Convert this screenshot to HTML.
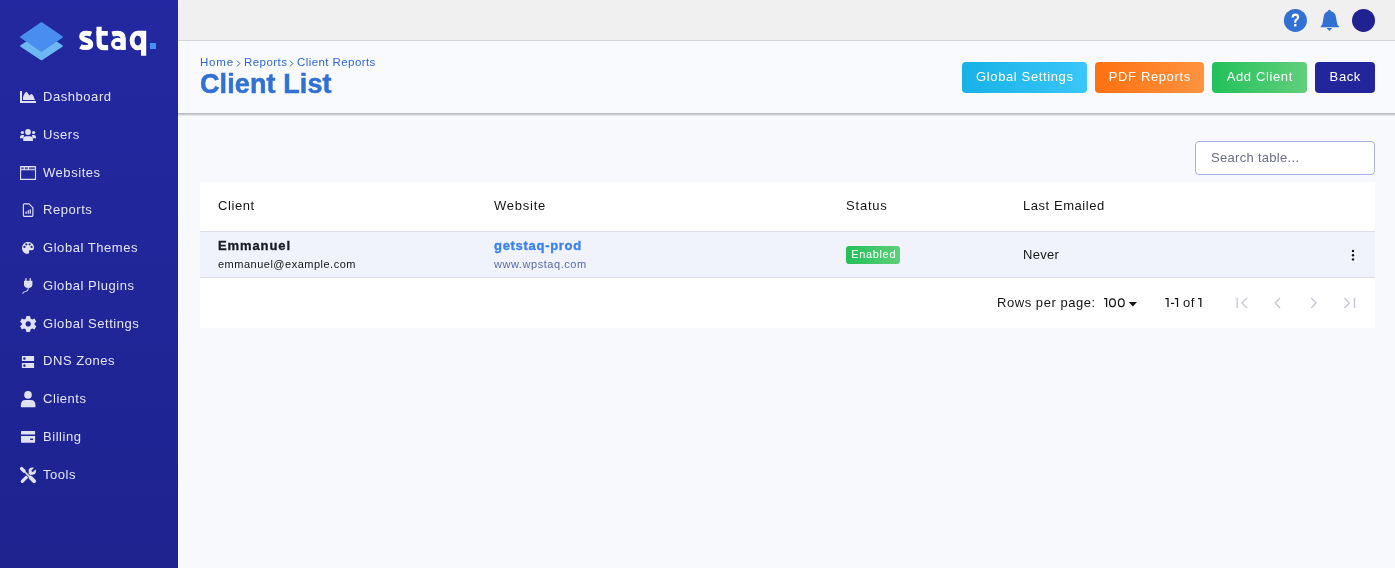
<!DOCTYPE html>
<html><head><meta charset="utf-8">
<style>
*{margin:0;padding:0;box-sizing:border-box}
html,body{width:1395px;height:568px;overflow:hidden;font-family:"Liberation Sans",sans-serif;background:#f8f9fd}
.abs{position:absolute}
.t,.nav,.btn,.badge{will-change:transform}
#side{position:absolute;left:0;top:0;width:178px;height:568px;background:linear-gradient(#2328a0,#1e2390)}
#topbar{position:absolute;left:178px;top:0;width:1217px;height:41px;background:#f0f0f0;border-bottom:1px solid #d6d7de}
#hdr{position:absolute;left:178px;top:41px;width:1217px;height:72px;background:#f9fafe;box-shadow:0 1px 0 #b9bac0,0 2px 0 #cdced6,0 3px 0 #e4e5ec}
.nav{position:absolute;left:43px;color:#e3e5f6;font-size:13px;letter-spacing:.55px;white-space:nowrap}
.ic{position:absolute}
.btn{position:absolute;top:62px;height:31px;border-radius:4px;color:#fff;font-size:13px;text-align:center;line-height:30px;letter-spacing:.62px;text-indent:.6px;white-space:nowrap}
.t{position:absolute;white-space:nowrap}
.bc{top:56px;font-size:11.5px;color:#2f66d0}
</style></head><body>
<div id="side">
  <!-- logo -->
  <svg class="abs" style="left:0;top:0" width="178" height="70" viewBox="0 0 178 70">
    <path d="M21 46 L41.5 32.5 L62 46 L41.5 59.5 Z" fill="#6db8f4" stroke="#6db8f4" stroke-width="1.6" stroke-linejoin="round"/>
    <path d="M21 37 L41.5 22.8 L62 37 L41.5 51.2 Z" fill="#4a8df0" stroke="#4a8df0" stroke-width="1.6" stroke-linejoin="round"/>
  </svg>
  <svg class="abs" style="left:70px;top:20px" width="100" height="40" viewBox="70 20 100 40" fill="none" stroke="#fff">
    <path d="M91.2 34.1 C89.8 33.5 88.2 33.3 86.3 33.3 C83.3 33.3 81.7 34.5 81.7 36.5 C81.7 38.5 83.3 39.3 86.1 40.1 C89.3 41 90.8 42 90.8 44.3 C90.8 46.6 88.9 47.6 85.9 47.6 C83.7 47.6 81.8 47.2 80.4 46.4" stroke-width="5"/>
    <path d="M99.1 26.7 V42.6 Q99.1 47.6 103.6 47.6 H108.1" stroke-width="5.2"/>
    <path d="M96.5 33.35 H107.8" stroke-width="4.7"/>
    <path d="M112.2 33.9 Q114.4 33.3 117.4 33.3 Q123.2 33.3 123.2 38.8 V50.1" stroke-width="5.2"/>
    <ellipse cx="117.8" cy="43.9" rx="4.9" ry="4.15" stroke-width="3.8"/>
    <ellipse cx="137.8" cy="40.5" rx="5.75" ry="7.3" stroke-width="4.8"/>
    <path d="M137.8 33.3 H143.6 V55.8" stroke-width="5.2"/>
  </svg>
  <div class="abs" style="left:150px;top:43px;width:6.3px;height:6.3px;background:#4490f4"></div>


  <svg class="abs" style="left:0;top:0" width="178" height="568" viewBox="0 0 178 568" fill="#dfe2f3">
    <!-- dashboard -->
    <rect x="20" y="91" width="2" height="12"/>
    <rect x="20" y="101" width="16" height="2"/>
    <path d="M23 100 L23 97 Q25 92 26.3 92 Q27.5 92 29.2 95.5 Q30.5 94 31.6 94 Q33 94 35 100 Z"/>
    <!-- users -->
    <circle cx="28" cy="132" r="2.9"/>
    <circle cx="22.4" cy="132.5" r="1.6"/>
    <circle cx="33.6" cy="132.5" r="1.6"/>
    <path d="M23.2 141 L23.2 139 Q23.5 136.2 26 136.2 L30 136.2 Q32.6 136.2 32.9 139 L32.9 141 Z"/>
    <path d="M20 138.3 L20 137 Q20.3 135 22 135 L24 135 L23.6 138.3 Z"/>
    <path d="M36 138.3 L36 137 Q35.7 135 34 135 L32 135 L32.4 138.3 Z"/>
    <!-- websites -->
    <rect x="20.6" y="166.3" width="14.9" height="3.4" fill="#dfe2f3" opacity=".25"/>
    <path d="M20.6 166.6 H35.5 V179.4 H20.6 Z M20.6 169.7 H35.5 M24.3 166.6 V169.7 M28.4 166.6 V169.7" fill="none" stroke="#dfe2f3" stroke-width="1.1"/>
    <!-- reports -->
    <path d="M23.4 204.8 Q23.4 203.8 24.4 203.8 H29 L32.9 207.7 V215.3 Q32.9 216.3 31.9 216.3 H24.4 Q23.4 216.3 23.4 215.3 Z" fill="none" stroke="#dfe2f3" stroke-width="1.2"/>
    <path d="M25.2 213.8 V212 L26.8 211.2 V213.8 Z M27.5 213.8 V210.6 L29 210 V213.8 Z M29.5 213.8 V209.5 L31 209.2 V213.8 Z" opacity=".85"/>
    <!-- palette -->
    <path d="M28 241.9 C31.6 241.9 34.1 244.4 34.1 247.4 C34.1 249.4 32.7 250.2 31.1 250.2 L30 250.2 C29.1 250.2 28.7 250.8 29 251.5 C29.4 252.4 29.2 253.8 27.7 253.8 C24.4 253.8 22 251.2 22 247.9 C22 244.6 24.6 241.9 28 241.9 Z M24.4 245.7 a1.15 1.15 0 1 0 0.01 0 Z M26.3 243.2 a1.1 1.1 0 1 0 0.01 0 Z M29.6 243.2 a1.1 1.1 0 1 0 0.01 0 Z M31.6 245.8 a1.15 1.15 0 1 0 0.01 0 Z" fill-rule="evenodd"/>
    <!-- plug -->
    <rect x="25.2" y="278.1" width="1.5" height="3" rx=".6" opacity=".85"/>
    <rect x="29.5" y="278.1" width="1.5" height="3" rx=".6" opacity=".85"/>
    <path d="M24 280.8 H32.4 V284.5 Q32.4 287.9 28.2 287.9 Q24 287.9 24 284.5 Z"/>
    <path d="M28.2 287.5 Q28.6 290.5 26 291.3 Q23.5 292 22.4 293.6" fill="none" stroke="#dfe2f3" stroke-width="1.1" opacity=".85"/>
    <!-- gear -->
    <g transform="translate(28.2 324)">
      <path d="M-1.8 -7.9 H1.8 L2.3 -5.6 L4.1 -4.6 L6.3 -5.4 L8.1 -2.3 L6.3 -0.8 V0.8 L8.1 2.3 L6.3 5.4 L4.1 4.6 L2.3 5.6 L1.8 7.9 H-1.8 L-2.3 5.6 L-4.1 4.6 L-6.3 5.4 L-8.1 2.3 L-6.3 0.8 V-0.8 L-8.1 -2.3 L-6.3 -5.4 L-4.1 -4.6 L-2.3 -5.6 Z M0 -2.7 A2.7 2.7 0 1 0 0.01 -2.7 Z" fill-rule="evenodd"/>
    </g>
    <!-- dns -->
    <path d="M22.4 356 H33.6 Q34.1 356 34.1 356.5 V360.5 Q34.1 361 33.6 361 H22.4 Q21.9 361 21.9 360.5 V356.5 Q21.9 356 22.4 356 Z M24.4 357.2 a1.3 1.3 0 1 0 0.01 0 Z" fill-rule="evenodd"/>
    <path d="M22.4 363.1 H33.6 Q34.1 363.1 34.1 363.6 V367.5 Q34.1 368 33.6 368 H22.4 Q21.9 368 21.9 367.5 V363.6 Q21.9 363.1 22.4 363.1 Z M24.4 364.3 a1.3 1.3 0 1 0 0.01 0 Z" fill-rule="evenodd"/>
    <!-- client -->
    <circle cx="28" cy="394.9" r="3.8"/>
    <path d="M20.9 407.2 V405.2 Q20.9 400 25.5 400 H30.8 Q35.4 400 35.4 405.2 V407.2 Z"/>
    <!-- billing -->
    <path d="M21.6 431.1 H34.5 Q35.1 431.1 35.1 431.7 V434.5 H21 V431.7 Q21 431.1 21.6 431.1 Z"/>
    <path d="M21 436 H35.1 V442.1 Q35.1 442.7 34.5 442.7 H21.6 Q21 442.7 21 442.1 Z M30.2 438.6 H33 V439.9 H30.2 Z" fill-rule="evenodd"/>
    <!-- tools -->
    <g stroke-linecap="round" fill="none">
      <line x1="22.3" y1="481.3" x2="30.2" y2="473.4" stroke="#dfe2f3" stroke-width="3.2"/>
      <circle cx="32.3" cy="471.1" r="3.7" fill="#dfe2f3" stroke="none"/>
      <line x1="32.6" y1="470.8" x2="36.5" y2="466.9" stroke="#1f2494" stroke-width="2.3"/>
      <line x1="24.2" y1="471.2" x2="30.6" y2="477.6" stroke="#1f2494" stroke-width="3"/>
      <line x1="24.2" y1="471.2" x2="30.6" y2="477.6" stroke="#dfe2f3" stroke-width="1.5"/>
      <line x1="21.6" y1="468.6" x2="24" y2="471" stroke="#dfe2f3" stroke-width="3.4"/>
      <line x1="30.6" y1="477.6" x2="34.1" y2="481.1" stroke="#dfe2f3" stroke-width="4"/>
    </g>
  </svg>
  <div class="nav" style="top:89px">Dashboard</div>
  <div class="nav" style="top:127px">Users</div>
  <div class="nav" style="top:165px">Websites</div>
  <div class="nav" style="top:202px">Reports</div>
  <div class="nav" style="top:240px">Global Themes</div>
  <div class="nav" style="top:278px">Global Plugins</div>
  <div class="nav" style="top:316px">Global Settings</div>
  <div class="nav" style="top:353px">DNS Zones</div>
  <div class="nav" style="top:391px">Clients</div>
  <div class="nav" style="top:429px">Billing</div>
  <div class="nav" style="top:467px">Tools</div>
</div>

<div id="topbar"></div>
<div id="hdr"></div>

<div class="t bc" style="left:199.5px;letter-spacing:.8px">Home</div>
<svg class="abs" style="left:236px;top:60px" width="5" height="7" viewBox="0 0 5 7"><path d="M1 0.6 L3.8 3.5 L1 6.4" fill="none" stroke="#2f66d0" stroke-width="1"/></svg>
<div class="t bc" style="left:244px;letter-spacing:.45px">Reports</div>
<svg class="abs" style="left:289px;top:60px" width="5" height="7" viewBox="0 0 5 7"><path d="M1 0.6 L3.8 3.5 L1 6.4" fill="none" stroke="#2f66d0" stroke-width="1"/></svg>
<div class="t bc" style="left:297px;letter-spacing:.42px">Client Reports</div>
<div class="t" style="left:200px;top:69px;font-size:27px;font-weight:bold;color:#3370d4;letter-spacing:.1px;-webkit-text-stroke:.5px #3370d4">Client List</div>

<div class="btn" style="left:962px;width:125px;background:linear-gradient(90deg,#18b2e6,#3ac6f9)">Global Settings</div>
<div class="btn" style="left:1095px;width:109px;background:linear-gradient(90deg,#ff7010,#fe9340)">PDF Reports</div>
<div class="btn" style="left:1212px;width:95px;background:linear-gradient(90deg,#21c15a,#62cf7c)">Add Client</div>
<div class="btn" style="left:1315px;width:60px;background:#22269a">Back</div>

<div class="abs" style="left:1195px;top:141px;width:180px;height:34px;border:1px solid #a5b2e2;border-radius:4px;background:#fff"></div>
<div class="t" style="left:1211px;top:150px;font-size:13px;color:#6b6f80;letter-spacing:.3px">Search table...</div>

<div class="abs" style="left:200px;top:182px;width:1175px;height:146px;background:#fff"></div>
<div class="abs" style="left:200px;top:231px;width:1175px;height:47px;background:#f0f3fc;border-top:1px solid #dcdfe8;border-bottom:1px solid #dcdfe8"></div>

<div class="t" style="left:218px;top:198px;font-size:13px;color:#161616;letter-spacing:.6px">Client</div>
<div class="t" style="left:494px;top:198px;font-size:13px;color:#161616;letter-spacing:.75px">Website</div>
<div class="t" style="left:846px;top:198px;font-size:13px;color:#161616;letter-spacing:.8px">Status</div>
<div class="t" style="left:1023px;top:198px;font-size:13px;color:#161616;letter-spacing:.55px">Last Emailed</div>

<div class="t" style="left:218px;top:238px;font-size:13px;font-weight:bold;color:#1a1c26;letter-spacing:.9px;-webkit-text-stroke:.35px #1a1c26">Emmanuel</div>
<div class="t" style="left:218px;top:258px;font-size:11px;color:#161616;letter-spacing:.5px">emmanuel@example.com</div>
<div class="t" style="left:494px;top:238px;font-size:13px;font-weight:bold;color:#3b82f0;letter-spacing:.7px;-webkit-text-stroke:.35px #3b82f0">getstaq-prod</div>
<div class="t" style="left:494px;top:258px;font-size:11px;color:#5a6aab;letter-spacing:.55px">www.wpstaq.com</div>
<div class="abs badge" style="left:846px;top:246px;width:54px;height:18px;border-radius:3px;background:linear-gradient(90deg,#22c05a,#5fcf7a);color:#fff;font-size:11px;line-height:16px;text-align:center;letter-spacing:.65px;text-indent:1.4px">Enabled</div>
<div class="t" style="left:1023px;top:247px;font-size:13px;color:#161616;letter-spacing:.3px">Never</div>

<div class="t" style="left:997px;top:295px;font-size:13px;color:#161616;letter-spacing:.55px">Rows per page:</div>
<svg class="abs" style="left:1100px;top:292px" width="40" height="20" viewBox="1100 292 40 20" fill="none" stroke="#161616" stroke-width="1.25"><path d="M1104 298.7 H1106.6 V306.9"/><ellipse cx="1112.5" cy="302.7" rx="2.9" ry="3.9"/><ellipse cx="1121.3" cy="302.7" rx="2.9" ry="3.9"/><path d="M1128.7 302 H1137 L1132.85 306.4 Z" fill="#161616" stroke="none"/></svg>
<svg class="abs" style="left:1160px;top:292px" width="50" height="20" viewBox="1160 292 50 20" fill="none" stroke="#161616" stroke-width="1.25"><path d="M1165.3 298.7 H1168 V306.9"/><path d="M1170.9 303.4 H1174.2"/><path d="M1174.8 298.7 H1177.5 V306.9"/><path d="M1198.1 298.7 H1200.8 V306.9"/></svg>
<div class="t" style="left:1183px;top:295px;font-size:13px;color:#161616;letter-spacing:.6px">of</div>



<!-- top icons -->
<svg class="abs" style="left:1270px;top:0" width="125" height="40" viewBox="0 0 125 40">
  <circle cx="25.4" cy="20.4" r="11.5" fill="#3370d4"/>
  <path d="M21.6 17.4 Q21.6 13.6 25.4 13.6 Q29.2 13.6 29.2 17.1 Q29.2 19.2 27.2 20.2 Q26.3 20.7 26.3 21.8 L26.3 22.7 L24.2 22.7 L24.2 21.5 Q24.2 19.6 25.9 18.8 Q27 18.2 27 17.2 Q27 15.7 25.4 15.7 Q23.8 15.7 23.8 17.4 Z" fill="#fff"/>
  <rect x="24" y="24" width="2.4" height="2.4" rx=".4" fill="#fff"/>
  <path d="M59.4 9.8 Q60.4 9.8 60.9 11.2 Q65.4 12.3 65.9 16.8 L67.1 23.6 Q67.5 25.5 68.9 26.3 V27.2 H50.7 V26.3 Q52.1 25.5 52.5 23.6 L53.7 16.8 Q54.2 12.3 57.9 11.2 Q58.4 9.8 59.4 9.8 Z" fill="#3370d4"/>
  <path d="M56.6 28.1 H62.1 L59.35 31 Z" fill="#3370d4"/>
  <circle cx="93.5" cy="20.4" r="11.5" fill="#1f2290"/>
</svg>
<!-- kebab -->
<svg class="abs" style="left:1350px;top:248px" width="6" height="14" viewBox="0 0 6 14">
  <circle cx="3" cy="3" r="1.2" fill="#111"/><circle cx="3" cy="7.2" r="1.2" fill="#111"/><circle cx="3" cy="11.4" r="1.2" fill="#111"/>
</svg>

<!-- pagination -->
<svg class="abs" style="left:1230px;top:292px" width="135" height="22" viewBox="0 0 135 22" fill="none" stroke="#c6c8d0" stroke-width="1.35">
  <path d="M7.2 5.8 V16"/><path d="M17 6 L12 11 L17 16"/>
  <path d="M50 6 L45.3 11 L50 16"/>
  <path d="M81.3 6 L86 11 L81.3 16"/>
  <path d="M114.5 6 L119.5 11 L114.5 16"/><path d="M124.5 5.8 V16"/>
</svg>
</body></html>
